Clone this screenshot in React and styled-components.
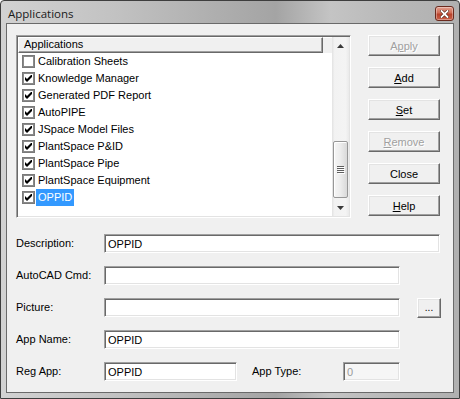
import React from "react";
import styled, { createGlobalStyle } from "styled-components";

const GlobalStyle = createGlobalStyle`
  html, body {
    margin: 0;
    padding: 0;
    background: #ffffff;
  }
  * {
    box-sizing: border-box;
  }
`;

const Window = styled.div`
  width: 460px;
  height: 399px;
  display: flex;
  flex-direction: column;
  border: 1px solid #3e3e3e;
  border-radius: 4px 4px 0 0;
  padding: 0 5px 5px 5px;
  background: linear-gradient(
    to right,
    #d2d2d2 0%,
    #c2c2c2 25%,
    #b0b0b0 45%,
    #a4a4a4 60%,
    #c4c4c4 72%,
    #b8b8b8 86%,
    #b0b0b0 100%
  );
  font-family: "Liberation Sans", Arial, sans-serif;
  font-size: 11px;
  color: #000;
`;

const TitleBar = styled.div`
  height: 22px;
  display: flex;
  align-items: center;
  justify-content: space-between;
  padding: 0 0 0 2px;
`;

const Title = styled.span`
  font-family: "Open Sans", "Liberation Sans", sans-serif;
  font-size: 11.5px;
  color: #1a1a1a;
  margin-top: 2px;
`;

const CloseButton = styled.div`
  width: 19px;
  height: 15px;
  margin-top: 3px;
  border: 1px solid #6b2a1e;
  border-radius: 3px;
  background: linear-gradient(to bottom, #e3a08f 0%, #cf6b55 45%, #b7412a 55%, #c9604a 100%);
  box-shadow: inset 0 0 0 1px rgba(255, 255, 255, 0.35);
  display: flex;
  align-items: center;
  justify-content: center;
`;

const Client = styled.div`
  flex: 1;
  border: 1px solid #6a6a6a;
  background: #f0f0f0;
  padding: 11px 0 0 9px;
  display: flex;
  flex-direction: column;
`;

const TopArea = styled.div`
  display: flex;
  align-items: flex-start;
`;

const ListBox = styled.div`
  width: 335px;
  height: 183px;
  display: flex;
  background: #fff;
  border: 1px solid;
  border-color: #a0a0a0 #ffffff #ffffff #a0a0a0;
  box-shadow: inset 1px 1px 0 #696969, inset -1px -1px 0 #e3e3e3;
  padding: 1px;
`;

const ListMain = styled.div`
  flex: 1;
  display: flex;
  flex-direction: column;
`;

const HeaderRow = styled.div`
  display: flex;
  height: 16px;
`;

const HeaderCell = styled.div`
  width: 305px;
  height: 16px;
  background: #f0f0f0;
  border: 1px solid;
  border-color: #ffffff #696969 #696969 #ffffff;
  box-shadow: inset -1px -1px 0 #a0a0a0;
  padding-left: 5px;
  line-height: 13px;
`;

const HeaderFill = styled.div`
  flex: 1;
  background: #f0f0f0;
  border-top: 1px solid #ffffff;
`;

const Rows = styled.div`
  display: flex;
  flex-direction: column;
`;

const Row = styled.div`
  height: 17px;
  display: flex;
  align-items: center;
  padding-left: 4px;
`;

const Check = styled.div`
  width: 13px;
  height: 13px;
  border: 1px solid #7a7a7a;
  box-shadow: inset 0 0 0 1px #8a8a8a;
  background: #fff;
  display: flex;
  align-items: center;
  justify-content: center;
  flex-shrink: 0;
`;

const RowText = styled.span`
  margin-left: 1px;
  padding: 0 2px;
  height: 17px;
  line-height: 17px;
  background: ${(p) => (p.$selected ? "#3399ff" : "transparent")};
  color: ${(p) => (p.$selected ? "#ffffff" : "#000000")};
`;

const ScrollBar = styled.div`
  width: 17px;
  display: flex;
  flex-direction: column;
  background: linear-gradient(to right, #e2e2e2 0%, #f2f2f2 15%, #f4f4f4 80%, #eaeaea 100%);
`;

const ArrowButton = styled.div`
  height: 17px;
  display: flex;
  align-items: center;
  justify-content: center;
`;

const Track = styled.div`
  flex: 1;
  display: flex;
  flex-direction: column;
  justify-content: flex-end;
  padding: 0 1px 1px 1px;
`;

const Thumb = styled.div`
  height: 57px;
  border: 1px solid #979797;
  border-radius: 2px;
  background: linear-gradient(to right, #f6f6f6 0%, #ececec 50%, #d9d9d9 100%);
  box-shadow: inset 1px 1px 0 #ffffff;
  display: flex;
  align-items: center;
  justify-content: center;
`;

const ButtonColumn = styled.div`
  margin-left: 17px;
  display: flex;
  flex-direction: column;
  gap: 11px;
`;

const DlgButton = styled.div`
  width: ${(p) => p.$w || 72}px;
  height: ${(p) => p.$h || 21}px;
  background: #f0f0f0;
  border: 1px solid;
  border-color: #ffffff #696969 #696969 #ffffff;
  box-shadow: inset -1px -1px 0 #a0a0a0, inset 1px 1px 0 #e3e3e3;
  display: flex;
  align-items: center;
  justify-content: center;
  color: ${(p) => (p.$disabled ? "#a0a0a0" : "#000000")};
  text-shadow: ${(p) => (p.$disabled ? "1px 1px 0 #ffffff" : "none")};
  u {
    text-decoration-thickness: 1px;
    text-underline-offset: 1px;
  }
`;

const Form = styled.div`
  margin-top: 16px;
  display: flex;
  flex-direction: column;
  gap: 13px;
`;

const FormRow = styled.div`
  display: flex;
  align-items: center;
  height: 19px;
`;

const Label = styled.span`
  width: ${(p) => p.$w || 88}px;
  margin-left: ${(p) => p.$ml || 0}px;
  flex-shrink: 0;
  margin-top: -2px;
`;

const TextBox = styled.div`
  width: ${(p) => p.$w}px;
  height: 19px;
  background: ${(p) => (p.$disabled ? "#f6f6f6" : "#ffffff")};
  border: 1px solid;
  border-color: #a0a0a0 #ffffff #ffffff #a0a0a0;
  box-shadow: inset 1px 1px 0 #696969, inset -1px -1px 0 #e3e3e3;
  padding: 2px 0 0 3px;
  line-height: 14px;
  color: ${(p) => (p.$disabled ? "#9a9a9a" : "#000000")};
`;

const BrowseButton = styled(DlgButton)`
  margin-left: 17px;
  align-items: flex-end;
  padding-bottom: 4px;
  font-size: 10px;
`;

const CheckMark = () => (
  <svg width="7" height="7" viewBox="0 0 7 7">
    <path d="M0 2 L2 4 L6 0 L7 0 L7 2 L2 7 L0 5 Z" fill="#000" />
  </svg>
);

const CloseGlyph = () => (
  <svg width="9" height="8" viewBox="0 0 9 8">
    <path d="M1.5 1 L7.5 7 M7.5 1 L1.5 7" stroke="#4a1a10" strokeWidth="3" strokeLinecap="square" />
    <path d="M1.5 1 L7.5 7 M7.5 1 L1.5 7" stroke="#ffffff" strokeWidth="1.8" strokeLinecap="square" />
  </svg>
);

const Arrow = ({ down }) => (
  <svg width="7" height="4" viewBox="0 0 7 4">
    <path d={down ? "M0 0 L7 0 L3.5 4 Z" : "M0 4 L7 4 L3.5 0 Z"} fill="#3a3a3a" />
  </svg>
);

const Grip = () => (
  <svg width="8" height="8" viewBox="0 0 8 8">
    {[0, 2, 4, 6].map((y) => (
      <g key={y}>
        <rect x="0" y={y} width="7" height="1" fill="#5e5e5e" />
        <rect x="1" y={y + 1} width="7" height="1" fill="#ffffff" />
      </g>
    ))}
  </svg>
);

const items = [
  { name: "Calibration Sheets", checked: false },
  { name: "Knowledge Manager", checked: true },
  { name: "Generated PDF Report", checked: true },
  { name: "AutoPIPE", checked: true },
  { name: "JSpace Model Files", checked: true },
  { name: "PlantSpace P&ID", checked: true },
  { name: "PlantSpace Pipe", checked: true },
  { name: "PlantSpace Equipment", checked: true },
  { name: "OPPID", checked: true, selected: true },
];

export default function App() {
  return (
    <>
      <GlobalStyle />
      <Window>
        <TitleBar>
          <Title>Applications</Title>
          <CloseButton>
            <CloseGlyph />
          </CloseButton>
        </TitleBar>
        <Client>
          <TopArea>
            <ListBox>
              <ListMain>
                <HeaderRow>
                  <HeaderCell>Applications</HeaderCell>
                  <HeaderFill />
                </HeaderRow>
                <Rows>
                  {items.map((item) => (
                    <Row key={item.name}>
                      <Check>{item.checked && <CheckMark />}</Check>
                      <RowText $selected={item.selected}>{item.name}</RowText>
                    </Row>
                  ))}
                </Rows>
              </ListMain>
              <ScrollBar>
                <ArrowButton>
                  <Arrow />
                </ArrowButton>
                <Track>
                  <Thumb>
                    <Grip />
                  </Thumb>
                </Track>
                <ArrowButton>
                  <Arrow down />
                </ArrowButton>
              </ScrollBar>
            </ListBox>
            <ButtonColumn>
              <DlgButton $disabled>
                A<u>p</u>ply
              </DlgButton>
              <DlgButton>
                <u>A</u>dd
              </DlgButton>
              <DlgButton>
                <u>S</u>et
              </DlgButton>
              <DlgButton $disabled>
                <u>R</u>emove
              </DlgButton>
              <DlgButton>Close</DlgButton>
              <DlgButton>
                <u>H</u>elp
              </DlgButton>
            </ButtonColumn>
          </TopArea>
          <Form>
            <FormRow>
              <Label>Description:</Label>
              <TextBox $w={336}>OPPID</TextBox>
            </FormRow>
            <FormRow>
              <Label>AutoCAD Cmd:</Label>
              <TextBox $w={296} />
            </FormRow>
            <FormRow>
              <Label>Picture:</Label>
              <TextBox $w={296} />
              <BrowseButton $w={24} $h={20}>...</BrowseButton>
            </FormRow>
            <FormRow>
              <Label>App Name:</Label>
              <TextBox $w={296}>OPPID</TextBox>
            </FormRow>
            <FormRow>
              <Label>Reg App:</Label>
              <TextBox $w={133}>OPPID</TextBox>
              <Label $w={91} $ml={15}>App Type:</Label>
              <TextBox $w={57} $disabled>0</TextBox>
            </FormRow>
          </Form>
        </Client>
      </Window>
    </>
  );
}
